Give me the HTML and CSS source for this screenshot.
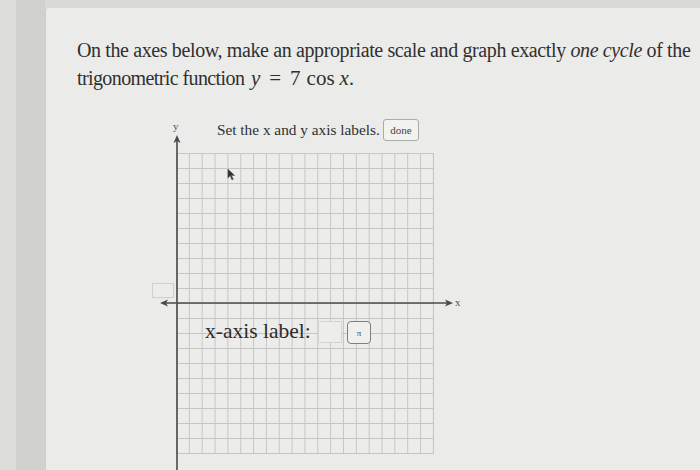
FILE: index.html
```html
<!DOCTYPE html>
<html>
<head>
<meta charset="utf-8">
<link rel="stylesheet" href="styles.css">
</head>
<body>
<div class="screen">
  <div class="gutter"></div>
  <div class="rail"></div>
  <main class="panel">
    <p class="prompt">On the axes below, make an appropriate scale and graph exactly <em>one cycle</em> of the<br><span class="l2">trigonometric function</span> <span class="math"><i>y</i><span class="rel">=</span>7<span class="fn">cos</span><i>x</i></span>.</p>
    <div class="graph">
      <svg class="axes" width="320" height="360" viewBox="0 0 320 360">
        <line x1="27" y1="24" x2="27" y2="360" stroke="#4a4a4a" stroke-width="1.6"/>
        <polygon points="27,20 23.5,28 27,26 30.5,28" fill="#4a4a4a"/>
        <line x1="14" y1="188" x2="299" y2="188" stroke="#4a4a4a" stroke-width="1.6"/>
        <polygon points="10,188 18,184.5 16,188 18,191.5" fill="#4a4a4a"/>
        <polygon points="303,188 295,184.5 297,188 295,191.5" fill="#4a4a4a"/>
      </svg>
      <div class="grid"></div>
      <span class="axis-name y-name">y</span>
      <span class="axis-name x-name">x</span>
      <p class="instr">Set the x and y axis labels.</p>
      <button class="done">done</button>
      <div class="ybox"></div>
      <div class="xlabel">x-axis label:</div>
      <div class="xinput"></div>
      <button class="pi">π</button>
      <svg class="cursor" width="9" height="13" viewBox="0 0 10 14">
        <path d="M1 1 L1 11 L3.5 8.5 L5.5 13 L7 12.3 L5 8 L8.5 8 Z" fill="#333" stroke="#555" stroke-width="0.5"/>
      </svg>
    </div>
  </main>
</div>
</body>
</html>
```

FILE: styles.css
```css
* { box-sizing: border-box; }
html, body { margin: 0; padding: 0; }
body {
  width: 700px;
  height: 470px;
  overflow: hidden;
  background: #d9d9d7;
  font-family: "Liberation Serif", "DejaVu Serif", serif;
  color: #303030;
}
.screen {
  display: flex;
  height: 470px;
}
.gutter {
  flex: 0 0 16px;
  background: #dcdcda;
}
.rail {
  flex: 0 0 29px;
  background: #d1d1cf;
}
.panel {
  flex: 1 1 auto;
  min-width: 0;
  margin-top: 8px;
  background: #ebebe9;
  border-left: 1px solid #cdcdcb;
  border-top-left-radius: 3px;
  padding: 28px 0 0 31px;
}
.prompt {
  margin: 0;
  font-size: 20px;
  line-height: 28px;
  letter-spacing: -0.38px;
  white-space: nowrap;
}
.prompt em { font-style: italic; }
.l2 { letter-spacing: -0.6px; }
.math {
  font-size: 21px;
  letter-spacing: 0;
  margin-left: 2px;
}
.math i { font-style: italic; }
.rel { margin: 0 9px; }
.fn { margin: 0 5px 0 6px; }
.graph {
  position: relative;
  width: 320px;
  height: 360px;
  margin: 23px 0 0 73px;
}
.axes {
  position: absolute;
  left: 0;
  top: 0;
  z-index: 2;
}
.grid {
  position: absolute;
  left: 26px;
  top: 38px;
  width: 258px;
  height: 301px;
  background-color: #ececea;
  background-image:
    linear-gradient(to right, #c6c6c4 1px, transparent 1px),
    linear-gradient(to bottom, #c6c6c4 1px, transparent 1px);
  background-size: 12.85px 15px;
  border-right: 1px solid #c6c6c4;
  border-bottom: 1px solid #c6c6c4;
}
.axis-name {
  position: absolute;
  font-size: 11px;
  color: #555;
}
.y-name { left: 23px; top: 5px; }
.x-name { left: 305px; top: 181px; }
.instr {
  position: absolute;
  margin: 0;
  left: 67px;
  top: 6px;
  font-size: 15.3px;
  white-space: nowrap;
}
.done {
  position: absolute;
  left: 233px;
  top: 4px;
  width: 36px;
  height: 22px;
  padding: 0;
  font-family: inherit;
  font-size: 11px;
  color: #444;
  background: #f2f2f0;
  border: 1px solid #aaaaa8;
  border-radius: 3px;
}
.ybox {
  position: absolute;
  left: 2px;
  top: 168px;
  width: 22px;
  height: 15px;
  border: 1px solid #cfcfcd;
  background: #ececea;
  z-index: 3;
}
.xlabel {
  position: absolute;
  left: 55px;
  top: 204px;
  font-size: 21.5px;
  color: #2c2c2c;
  z-index: 3;
}
.xinput {
  position: absolute;
  left: 168px;
  top: 206px;
  width: 24px;
  height: 22px;
  border: 1px solid #d4d4d2;
  background: #ededeb;
  z-index: 3;
}
.pi {
  position: absolute;
  left: 197px;
  top: 206px;
  width: 24px;
  height: 23px;
  padding: 0;
  font-family: inherit;
  font-size: 9px;
  color: #444;
  background: #efefed;
  border: 1px solid #7e7e7c;
  border-radius: 4px;
  z-index: 3;
}
.cursor {
  position: absolute;
  left: 77px;
  top: 53px;
  z-index: 4;
}
```
